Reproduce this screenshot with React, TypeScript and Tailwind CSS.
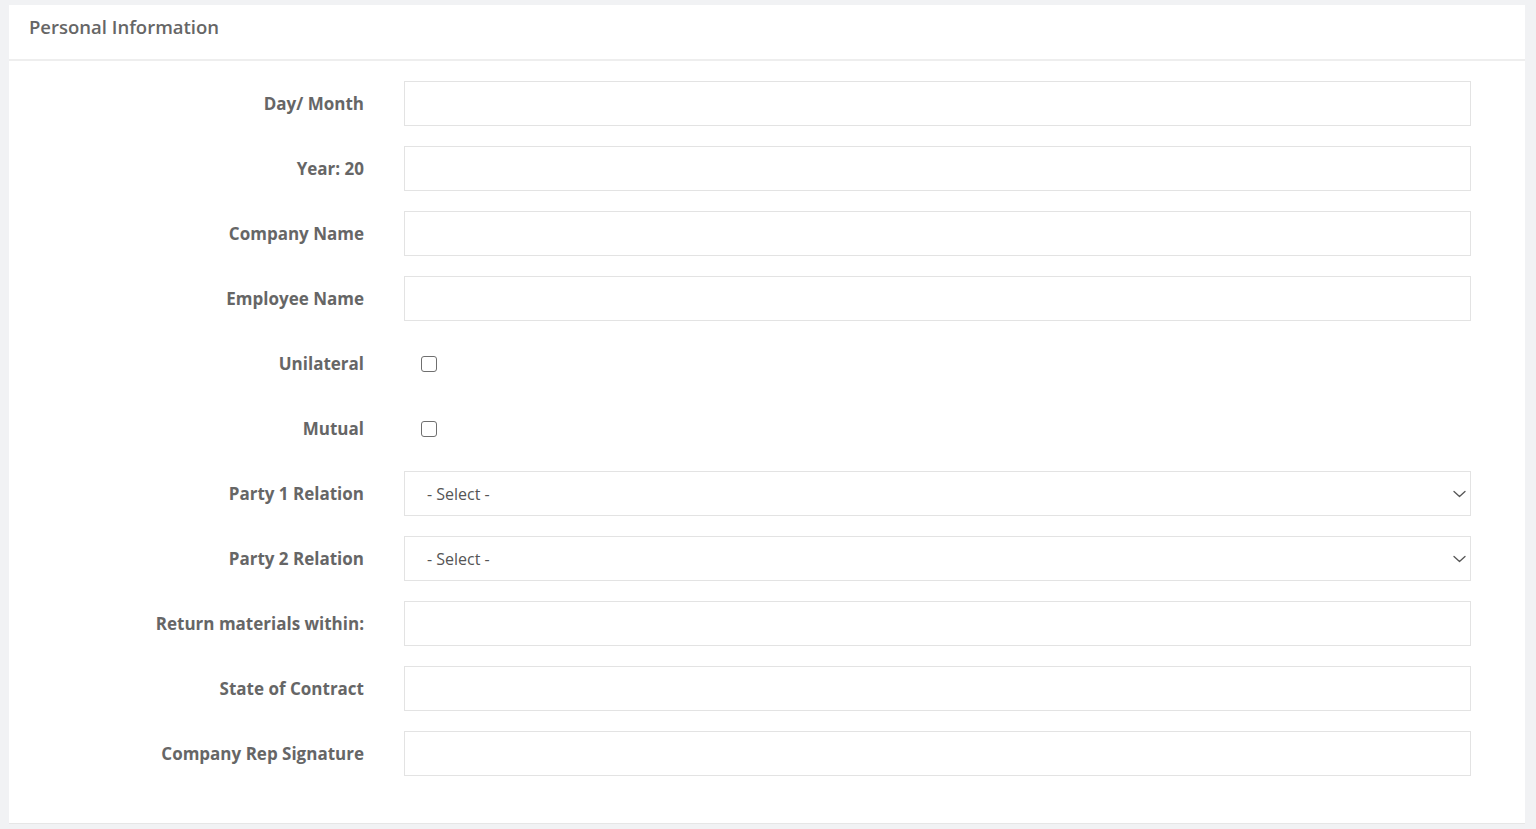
type Field = {
  label: string
  kind: "text" | "check" | "select"
}

const fields: Field[] = [
  { label: "Day/ Month", kind: "text" },
  { label: "Year: 20", kind: "text" },
  { label: "Company Name", kind: "text" },
  { label: "Employee Name", kind: "text" },
  { label: "Unilateral", kind: "check" },
  { label: "Mutual", kind: "check" },
  { label: "Party 1 Relation", kind: "select" },
  { label: "Party 2 Relation", kind: "select" },
  { label: "Return materials within:", kind: "text" },
  { label: "State of Contract", kind: "text" },
  { label: "Company Rep Signature", kind: "text" },
]

function Chevron() {
  return (
    <svg width="13" height="8" viewBox="0 0 13 8" fill="none" className="absolute right-[4px] top-1/2 -translate-y-1/2">
      <path d="M1 1.5l5.5 5 5.5-5" stroke="#555" strokeWidth="1.3" strokeLinecap="round" strokeLinejoin="round" />
    </svg>
  )
}

function FormRow({ label, kind }: Field) {
  return (
    <div className="flex items-center h-[45px]">
      <label className="w-[355px] shrink-0 text-right text-[17px] font-bold text-[#666]">{label}</label>
      <div className="ml-[40px] flex-1">
        {kind === "text" && (
          <input type="text" className="block w-full h-[45px] border border-[#e3e3e3] bg-white px-3 outline-none" />
        )}
        {kind === "check" && (
          <div className="pl-[17px] flex items-center">
            <span className="block w-[16px] h-[16px] rounded-[3px] border-[1.5px] border-[#6f6f6f] bg-white" />
          </div>
        )}
        {kind === "select" && (
          <div className="relative h-[45px] border border-[#e3e3e3] bg-white flex items-center pl-[22px] text-[16px] text-[#555]">
            - Select -
            <Chevron />
          </div>
        )}
      </div>
    </div>
  )
}

export default function App() {
  return (
    <div className="min-h-[829px] bg-[#f1f2f4] pt-[5px] pl-[9px] pr-[11px] font-['Open_Sans',sans-serif]">
      <div className="bg-white border-b border-[#e6e6e6]">
        <div className="h-[56px] border-b-2 border-[#eeeeee] pl-[20px] pt-[8px]">
          <h2 className="text-[18.5px] font-semibold text-[#666]">Personal Information</h2>
        </div>
        <div className="flex flex-col gap-[20px] pt-[20px] pb-[47px] pr-[54px]">
          {fields.map((f) => (
            <FormRow key={f.label} {...f} />
          ))}
        </div>
      </div>
    </div>
  )
}
